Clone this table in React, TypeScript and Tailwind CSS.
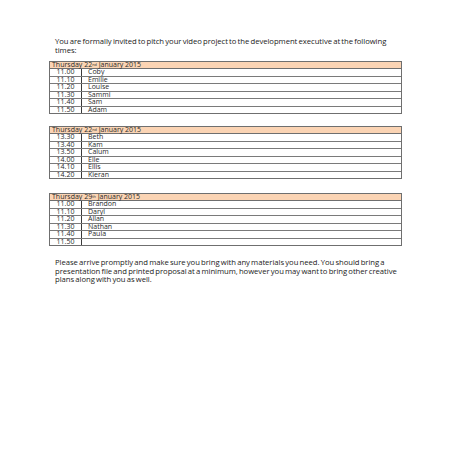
import React from "react";

type Day = { day: string; sup: string; rows: [string, string][] };

const days: Day[] = [
  {
    day: "22",
    sup: "nd",
    rows: [
      ["11.00", "Coby"],
      ["11.10", "Emilie"],
      ["11.20", "Louise"],
      ["11.30", "Sammi"],
      ["11.40", "Sam"],
      ["11.50", "Adam"],
    ],
  },
  {
    day: "22",
    sup: "nd",
    rows: [
      ["13.30", "Beth"],
      ["13.40", "Kam"],
      ["13.50", "Calum"],
      ["14.00", "Elle"],
      ["14.10", "Ellis"],
      ["14.20", "Kieran"],
    ],
  },
  {
    day: "29",
    sup: "th",
    rows: [
      ["11.00", "Brandon"],
      ["11.10", "Daryl"],
      ["11.20", "Allan"],
      ["11.30", "Nathan"],
      ["11.40", "Paula"],
      ["11.50", ""],
    ],
  },
];

const rowCls = [
  "h-[8px] border-b border-[#7a7a7a]",
  "h-[7px] border-b border-[#7a7a7a]",
  "h-[8px] border-b border-[#7a7a7a]",
  "h-[7px] border-b border-[#7a7a7a]",
  "h-[8px] border-b border-[#7a7a7a]",
  "h-[6px]",
];

function Schedule({ d }: { d: Day }) {
  return (
    <div className="w-[353px] border border-[#6f6f6f] text-[7px] leading-[5px] text-[#2a2a2a]">
      <div className="h-[7px] bg-[#fbd4b4] border-b border-[#6f6f6f] pl-[2px] pb-[1.5px] flex items-center">
        <span>
          Thursday {d.day}
          <sup className="text-[3.8px] relative -top-[1px]">{d.sup}</sup> January 2015
        </span>
      </div>
      {d.rows.map(([t, n], i) => (
        <div key={i} className={`flex ${rowCls[i]}`}>
          <div className="w-[32px] border-r border-[#3a3a3a] pb-[1.5px] flex items-center justify-center">
            {t}
          </div>
          <div className="flex-1 flex items-center pl-[6px] pb-[1.5px]">{n}</div>
        </div>
      ))}
    </div>
  );
}

export default function App() {
  return (
    <div
      className="w-[453px] h-[453px] bg-white pl-[49px] pt-[37px]"
      style={{ fontFamily: '"Open Sans", "Liberation Sans", sans-serif' }}
    >
      <p className="pl-[6px] text-[7.7px] leading-[9px] text-[#222] tracking-[-0.05px] [word-spacing:-0.7px] w-[352px]">
        You are formally invited to pitch your video project to the development executive at the following times:
      </p>
      <div className="mt-[6px]">
        <Schedule d={days[0]} />
      </div>
      <div className="mt-[12px]">
        <Schedule d={days[1]} />
      </div>
      <div className="mt-[14px]">
        <Schedule d={days[2]} />
      </div>
      <p className="mt-[12px] pl-[6px] text-[7.7px] leading-[8.5px] text-[#222] tracking-[-0.05px] [word-spacing:-0.7px] w-[352px]">
        Please arrive promptly and make sure you bring with any materials you need. You should bring a presentation file and printed proposal at a minimum, however you may want to bring other creative plans along with you as well.
      </p>
    </div>
  );
}
